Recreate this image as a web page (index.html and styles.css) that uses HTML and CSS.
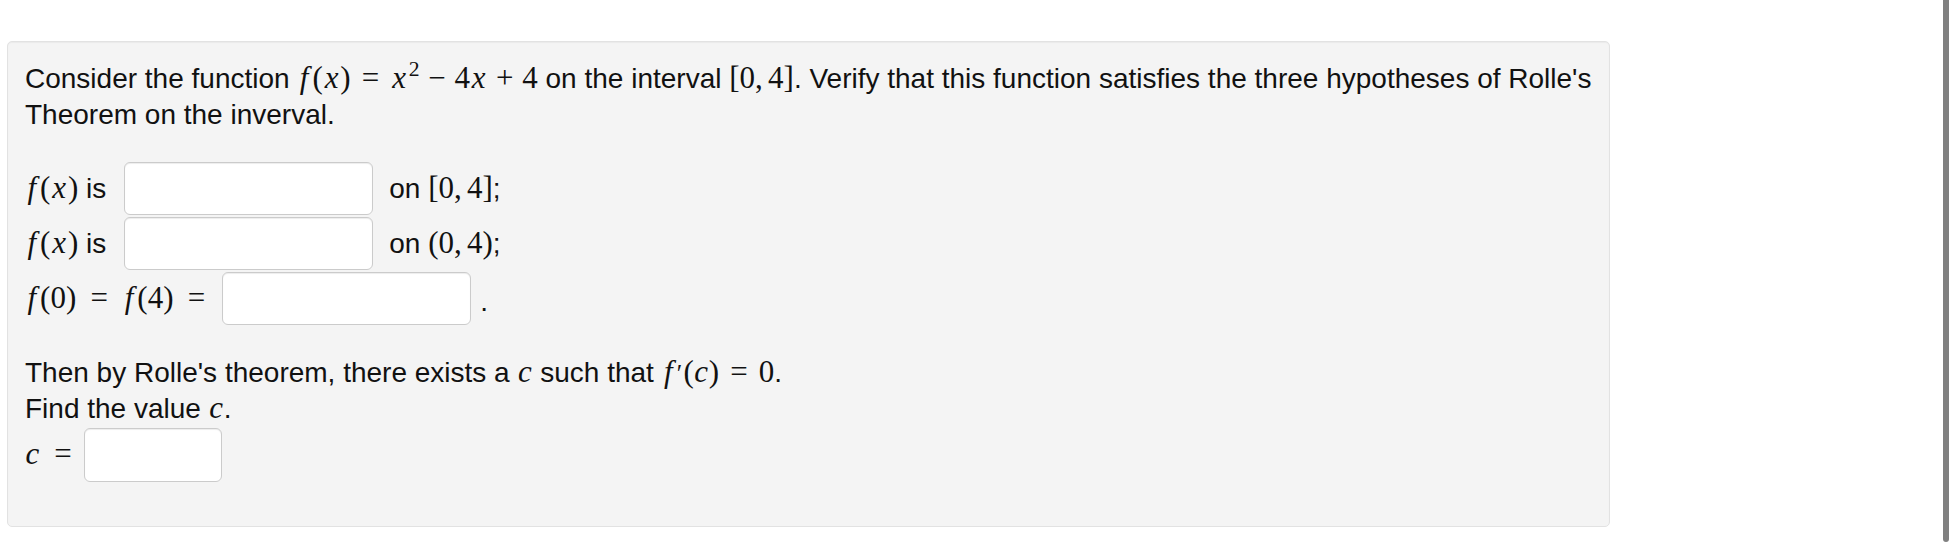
FILE: index.html
```html
<!DOCTYPE html>
<html lang="en">
<head>
<meta charset="utf-8">
<title>Rolle's Theorem</title>
<link rel="stylesheet" href="styles.css">
</head>
<body>
<div class="page">
  <div class="well">
    <p class="text">Consider the function <span class="m"><i class="f">f</i>(<i class="x">x</i>)<span class="rel">=</span><i class="x">x</i><sup>2</sup><span class="bin">−</span>4<i class="x">x</i><span class="bin">+</span>4</span> on the interval <span class="m">[0,<span class="thin"></span>4]</span>. Verify that this function satisfies the three hypotheses of Rolle's<br>Theorem on the inverval.</p>

    <div class="rows">
      <div class="row">
        <span class="lead"><span class="m"><i class="f">f</i>(<i class="x">x</i>)</span> is</span>
        <input class="ans wide" type="text" aria-label="answer 1">
        <span class="trail">on <span class="m">[0,<span class="thin"></span>4]</span>;</span>
      </div>
      <div class="row">
        <span class="lead"><span class="m"><i class="f">f</i>(<i class="x">x</i>)</span> is</span>
        <input class="ans wide" type="text" aria-label="answer 2">
        <span class="trail">on <span class="m">(0,<span class="thin"></span>4)</span>;</span>
      </div>
      <div class="row">
        <span class="lead"><span class="m"><i class="f">f</i>(0)<span class="rel">=</span><i class="f">f</i>(4)<span class="rel">=</span></span></span>
        <input class="ans wide eq" type="text" aria-label="answer 3">
        <span class="trail tight">.</span>
      </div>
    </div>

    <p class="text after">Then by Rolle's theorem, there exists a <span class="m"><i class="c">c</i></span> such that <span class="m"><i class="f">f</i><span class="prime">′</span>(<i class="c">c</i>)<span class="rel">=</span>0</span>.<br>Find the value <span class="m"><i class="c">c</i></span>.</p>

    <div class="row last">
      <span class="lead"><span class="m"><i class="c">c</i><span class="rel">=</span></span></span>
      <input class="ans narrow" type="text" aria-label="answer 4">
    </div>
  </div>
</div>
<div class="scrollbar"></div>
</body>
</html>
```

FILE: styles.css
```css
html, body {
  margin: 0;
  padding: 0;
  background: #ffffff;
}

body {
  font-family: "Liberation Sans", Arial, Helvetica, sans-serif;
  font-size: 28px;
  color: #111111;
}

.page {
  padding: 41px 0 0 7px;
}

.well {
  box-sizing: border-box;
  width: 1603px;
  background: #f4f4f4;
  border: 1px solid #e2e2e2;
  border-radius: 5px;
  box-shadow: inset 0 1px 1px rgba(0, 0, 0, 0.04);
  padding: 19px 19px 19px 17px;
}

.text {
  margin: 0;
  line-height: 36px;
  white-space: nowrap;
}

.text.after {
  margin-top: 30px;
}

.rows {
  margin-top: 29px;
  display: flex;
  flex-direction: column;
  gap: 2px;
}

.row {
  display: flex;
  align-items: center;
  height: 53px;
  line-height: 36px;
}

.row.last {
  margin-top: 1px;
  height: 54px;
  margin-bottom: 25px;
}

.lead {
  white-space: nowrap;
}

.ans {
  box-sizing: border-box;
  height: 53px;
  margin: 0 9px 0 18px;
  padding: 0 10px;
  background: #ffffff;
  border: 1px solid #cbcbcb;
  border-radius: 6px;
  box-shadow: inset 0 1px 1px rgba(0, 0, 0, 0.075);
  font-family: inherit;
  font-size: 24px;
  outline: none;
}

.ans.eq {
  margin-left: 17px;
}

.ans.wide {
  width: 249px;
}

.ans.narrow {
  width: 138px;
  height: 54px;
  margin-left: 12px;
}

.trail {
  white-space: nowrap;
  margin-left: 7px;
}

.trail.tight {
  margin-left: 0;
  margin-top: 6px;
}

/* math */
.m {
  font-family: "Liberation Serif", "Times New Roman", serif;
  font-size: 31px;
  line-height: 1;
  white-space: nowrap;
}

.m i {
  font-style: italic;
}

.m i.f {
  margin: 0 0.13em 0 0.08em;
}

.m i.x {
  margin: 0 0.06em;
}

.m i.c {
  margin: 0 0.02em;
}

.m sup {
  font-size: 0.7em;
  line-height: 0;
  vertical-align: 0.55em;
  margin-left: 0.04em;
}

.rel {
  margin: 0 0.36em;
}

.row .rel {
  margin: 0 0.46em;
}

.row .lead .rel:last-child {
  margin-right: 0;
}

.bin {
  margin: 0 0.28em;
}

.thin {
  display: inline-block;
  width: 0.17em;
}

.prime {
  font-size: 0.8em;
  margin-right: 0.05em;
}

.scrollbar {
  position: fixed;
  top: 0;
  right: 6px;
  width: 6px;
  height: 542px;
  background: #808080;
  border-radius: 0 0 3px 3px;
}
```
